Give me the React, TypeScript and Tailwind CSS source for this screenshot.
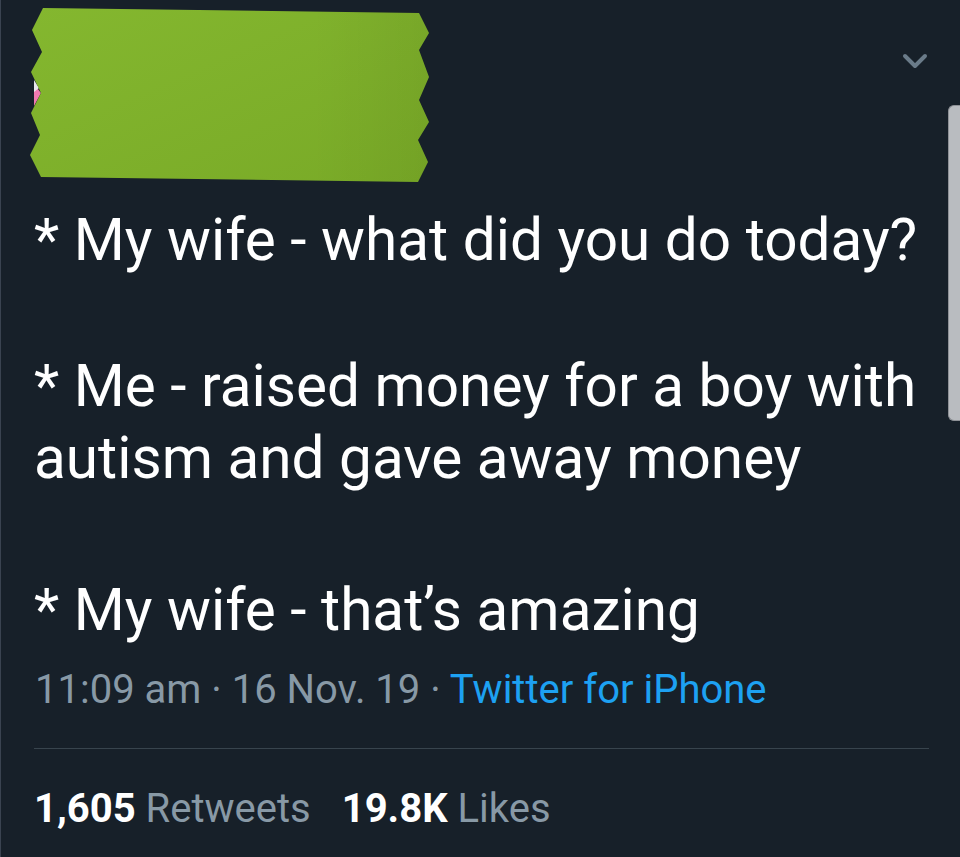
import { ChevronDown } from 'lucide-react'

function Redaction() {
  // green tape covering the avatar / name
  const pts =
    '42,8 418,13 428,33 418,50 428,77 418,100 428,122 417,140 427,162 417,182 40,177 29,155 39,135 30,113 40,93 30,72 41,52 31,30'
  return (
    <svg width="440" height="190" viewBox="0 0 440 190" className="block">
      <defs>
        <linearGradient id="tape" x1="0" y1="0" x2="1" y2="1">
          <stop offset="0" stopColor="#84b72f" />
          <stop offset="1" stopColor="#79aa27" />
        </linearGradient>
        <linearGradient id="fold" x1="0" y1="0" x2="1" y2="0">
          <stop offset="0" stopColor="#000" stopOpacity="0" />
          <stop offset="1" stopColor="#000" stopOpacity="0.05" />
        </linearGradient>
      </defs>
      <polygon points="33,84 40,93 33,106" fill="#f07ab0" />
      <polygon points="33,80 38,88 33,92" fill="#e8e8ea" />
      <polygon points={pts} fill="url(#tape)" />
      <polygon points="310,11 418,13 428,33 418,50 428,77 418,100 428,122 417,140 427,162 417,182 310,180" fill="url(#fold)" />
    </svg>
  )
}

export default function App() {
  return (
    <div className="relative w-[960px] h-[857px] overflow-hidden bg-[#172029] border-l border-[#3a4350] text-white font-['Roboto','Liberation_Sans',sans-serif]">
      <div className="flex h-[204px] justify-between">
        <Redaction />
        <ChevronDown className="mt-[41px] mr-[25px] h-[40px] w-[40px] text-[#6a7b89]" strokeWidth={2.4} />
      </div>

      <div className="pl-[33px] text-[58.5px] leading-[72px]">
        <p>* My wife - what did you do today?</p>
        <p className="mt-[74px]">
          * Me - raised money for a boy with
          <br />
          autism and gave away money
        </p>
        <p className="mt-[80px]">* My wife - that’s amazing</p>
      </div>

      <div className="mt-[20px] pl-[34px] text-[40px] leading-[48px] text-[#8899a6]">
        11:09 am · 16 Nov. 19 · <span className="text-[#1da1f2]">Twitter for iPhone</span>
      </div>

      <div className="mt-[34px] ml-[33px] mr-[31px] h-px bg-[#38444d]" />

      <div className="mt-[36px] flex gap-[31px] pl-[33px] text-[40px] leading-[48px]">
        <span>
          <span className="font-bold">1,605</span> <span className="text-[#8899a6]">Retweets</span>
        </span>
        <span>
          <span className="font-bold">19.8K</span> <span className="text-[#8899a6]">Likes</span>
        </span>
      </div>

      <div className="absolute right-0 top-[105px] h-[316px] w-[12px] rounded-l-[6px] border border-r-0 border-[#8e9196] bg-[#b9bcc0]" />
    </div>
  )
}
